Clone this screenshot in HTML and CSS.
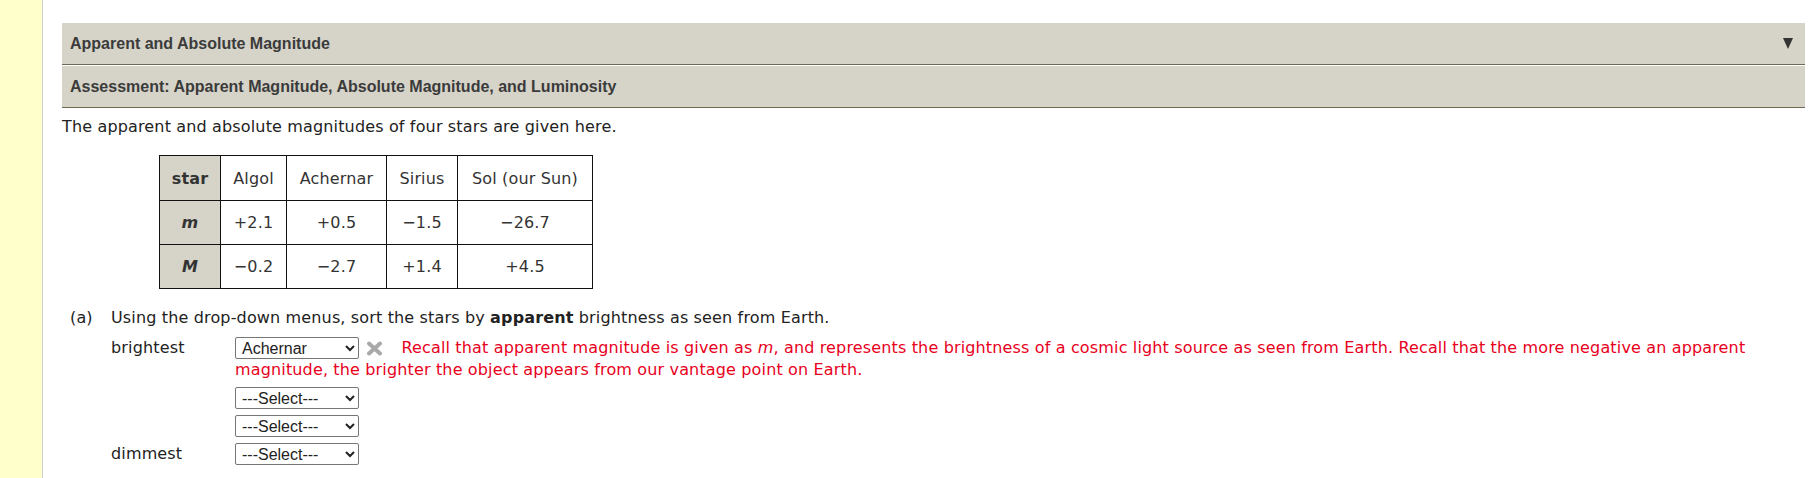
FILE: index.html
```html
<!DOCTYPE html>
<html lang="en">
<head>
    <meta charset="UTF-8">
    <title>Apparent and Absolute Magnitude</title>
    <link rel="stylesheet" href="styles.css">
</head>
<body>
    <div class="page">
        <aside class="side"></aside>
        <main class="content">
            <div class="bar">
                <span>Apparent and Absolute Magnitude</span>
                <svg class="caret" width="10" height="11" viewBox="0 0 10 11"><polygon points="0,0 10,0 5,11" fill="#333"/></svg>
            </div>
            <div class="bar">Assessment: Apparent Magnitude, Absolute Magnitude, and Luminosity</div>
            <p class="intro">The apparent and absolute magnitudes of four stars are given here.</p>
            <table class="mag">
                <tr class="head">
                    <th>star</th><td>Algol</td><td>Achernar</td><td>Sirius</td><td>Sol (our Sun)</td>
                </tr>
                <tr>
                    <th><i>m</i></th><td>+2.1</td><td>+0.5</td><td>&minus;1.5</td><td>&minus;26.7</td>
                </tr>
                <tr>
                    <th><i>M</i></th><td>&minus;0.2</td><td>&minus;2.7</td><td>+1.4</td><td>+4.5</td>
                </tr>
            </table>
            <div class="part">
                <span class="part-label">(a)</span>
                <div class="part-body">
                    <p class="prompt">Using the drop-down menus, sort the stars by <b>apparent</b> brightness as seen from Earth.</p>
                    <div class="sort">
                        <div class="sort-label">brightest</div>
                        <div class="sort-ctl">
                            <select><option>---Select---</option><option selected>Achernar</option><option>Algol</option><option>Sirius</option><option>Sol</option></select>
                            <svg class="wrong" width="17" height="15" viewBox="0 0 17 15"><path d="M3 2.5 L14 12.5 M14 2.5 L3 12.5" stroke="#a9a9a9" stroke-width="4" stroke-linecap="round"/></svg>
                            <span class="feedback">Recall that apparent magnitude is given as <i>m</i>, and represents the brightness of a cosmic light source as seen from Earth. Recall that the more negative an apparent magnitude, the brighter the object appears from our vantage point on Earth.</span>
                        </div>
                        <div class="sort-label"></div>
                        <div class="sort-ctl">
                            <select><option selected>---Select---</option><option>Achernar</option><option>Algol</option><option>Sirius</option><option>Sol</option></select>
                        </div>
                        <div class="sort-label"></div>
                        <div class="sort-ctl">
                            <select><option selected>---Select---</option><option>Achernar</option><option>Algol</option><option>Sirius</option><option>Sol</option></select>
                        </div>
                        <div class="sort-label">dimmest</div>
                        <div class="sort-ctl">
                            <select><option selected>---Select---</option><option>Achernar</option><option>Algol</option><option>Sirius</option><option>Sol</option></select>
                        </div>
                    </div>
                </div>
            </div>
        </main>
    </div>
</body>
</html>
```

FILE: styles.css
```css
:root { --bar: #d6d3c9; --bar-line: #6f6654; --text: #222; --wrong: #e8001c; }
body { margin: 0; font-family: "DejaVu Sans", Verdana, sans-serif; font-size: 16px; letter-spacing: 0.15px; color: var(--text); background: #fff; }
.page { display: flex; min-height: 478px; }
.side { width: 42px; flex: none; background: #ffffcc; border-right: 1px solid #cfcfcf; }
.content { flex: 1; padding: 23px 3px 0 19px; }
.bar { display: flex; justify-content: space-between; align-items: center; height: 41px; padding: 0 12px 0 8px; margin-bottom: 1px; background: var(--bar); border-bottom: 1px solid var(--bar-line); font-family: "Liberation Sans", Arial, sans-serif; font-weight: bold; font-size: 16px; letter-spacing: 0; color: #3b3b3b; }
.caret { display: block; }
.intro { margin: 9px 0 19px; line-height: 19px; }
.mag { border-collapse: collapse; margin-left: 97px; table-layout: fixed; width: 434px; color: #333; }
.mag th, .mag td { border: 1px solid #111; text-align: center; padding: 0; height: 43px; }
.mag .head th, .mag .head td { height: 44px; }
.mag th { background: var(--bar); width: 60px; }
.mag td:nth-child(2) { width: 65px; }
.mag td:nth-child(3) { width: 99px; }
.mag td:nth-child(4) { width: 70px; }
.part { display: flex; margin: 18px 0 0 8px; line-height: 22px; }
.part-label { width: 41px; flex: none; }
.part-body { flex: 1; }
.prompt { margin: 0 0 8px; }
.sort { display: grid; grid-template-columns: 124px 1fr; row-gap: 6px; }
.sort select { width: 124px; height: 22px; vertical-align: top; font-family: "Liberation Sans", Arial, sans-serif; font-size: 16px; letter-spacing: 0; color: #222; padding: 0 2px; border: 1px solid #767676; border-radius: 2px; background: #fff; }
.wrong { vertical-align: -3px; margin: 0 13px 0 2px; }
.feedback { color: var(--wrong); }
```
